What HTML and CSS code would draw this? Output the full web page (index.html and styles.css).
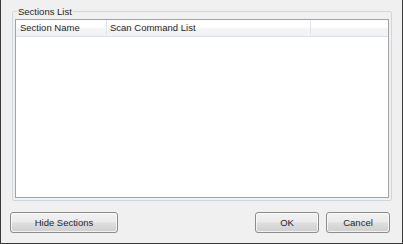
FILE: index.html
```html
<!DOCTYPE html>
<html>
<head>
<meta charset="utf-8">
<link rel="stylesheet" href="styles.css">
</head>
<body>
<div class="window">
  <fieldset class="group">
    <legend class="group-title">Sections List</legend>
    <div class="list">
      <div class="list-header">
        <div class="col col-name">Section Name</div>
        <div class="col col-cmd">Scan Command List</div>
        <div class="col col-rest"></div>
      </div>
      <div class="list-body"></div>
    </div>
  </fieldset>
  <div class="buttons">
    <button class="btn btn-wide">Hide Sections</button>
    <div class="spacer"></div>
    <button class="btn">OK</button>
    <button class="btn">Cancel</button>
  </div>
</div>
</body>
</html>
```
FILE: styles.css
```css
html, body {
  margin: 0;
  padding: 0;
  background: #f0f0f0;
}
body {
  font-family: "Liberation Sans", Arial, sans-serif;
  font-size: 9.5px;
  color: #1e1e1e;
}
.window {
  width: 403px;
  height: 244px;
  box-sizing: border-box;
  background: #f0f0f0;
  border-left: 1px solid #3a3a3a;
  border-right: 1px solid #3a3a3a;
  border-bottom: 1px solid #3a3a3a;
  padding: 6px 10px 0 9px;
  display: flex;
  flex-direction: column;
}
.group {
  margin: 0 0 0 2px;
  padding: 2px;
  border: 1px solid #d0d7dc;
  border-radius: 2px;
  min-width: 0;
}
.group-title {
  padding: 0 1px;
  margin-left: 2px;
  line-height: 11px;
  height: 11px;
  color: #1e1e1e;
}
.list {
  height: 179px;
  box-sizing: border-box;
  border: 1px solid #a0a3a8;
  background: #ffffff;
  display: flex;
  flex-direction: column;
}
.list-header {
  display: flex;
  height: 16px;
  flex: none;
  border-bottom: 1px solid #dcdfe3;
  background: linear-gradient(#ffffff 0%, #ffffff 45%, #f3f4f6 55%, #f1f2f4 100%);
}
.col {
  box-sizing: border-box;
  line-height: 16px;
  border-right: 1px solid #e3e6ea;
  white-space: nowrap;
}
.col-name {
  width: 91px;
  padding-left: 4px;
}
.col-cmd {
  width: 204px;
  padding-left: 3px;
}
.col-rest {
  flex: 1;
  border-right: none;
}
.list-body {
  flex: 1;
  background: #ffffff;
}
.buttons {
  display: flex;
  margin-top: 11px;
  padding-right: 2px;
  gap: 7px;
}
.spacer {
  flex: 1;
}
.btn {
  width: 64px;
  height: 21px;
  box-sizing: border-box;
  border: 1px solid #8c8c8c;
  border-radius: 3px;
  background: linear-gradient(#f2f2f2 0%, #ebebeb 45%, #dddddd 55%, #cfcfcf 100%);
  box-shadow: inset 0 0 0 1px rgba(255,255,255,0.7);
  font-family: "Liberation Sans", Arial, sans-serif;
  font-size: 9.5px;
  color: #1e1e1e;
  padding: 0;
  margin: 0;
}
.btn-wide {
  width: 108px;
}
```
